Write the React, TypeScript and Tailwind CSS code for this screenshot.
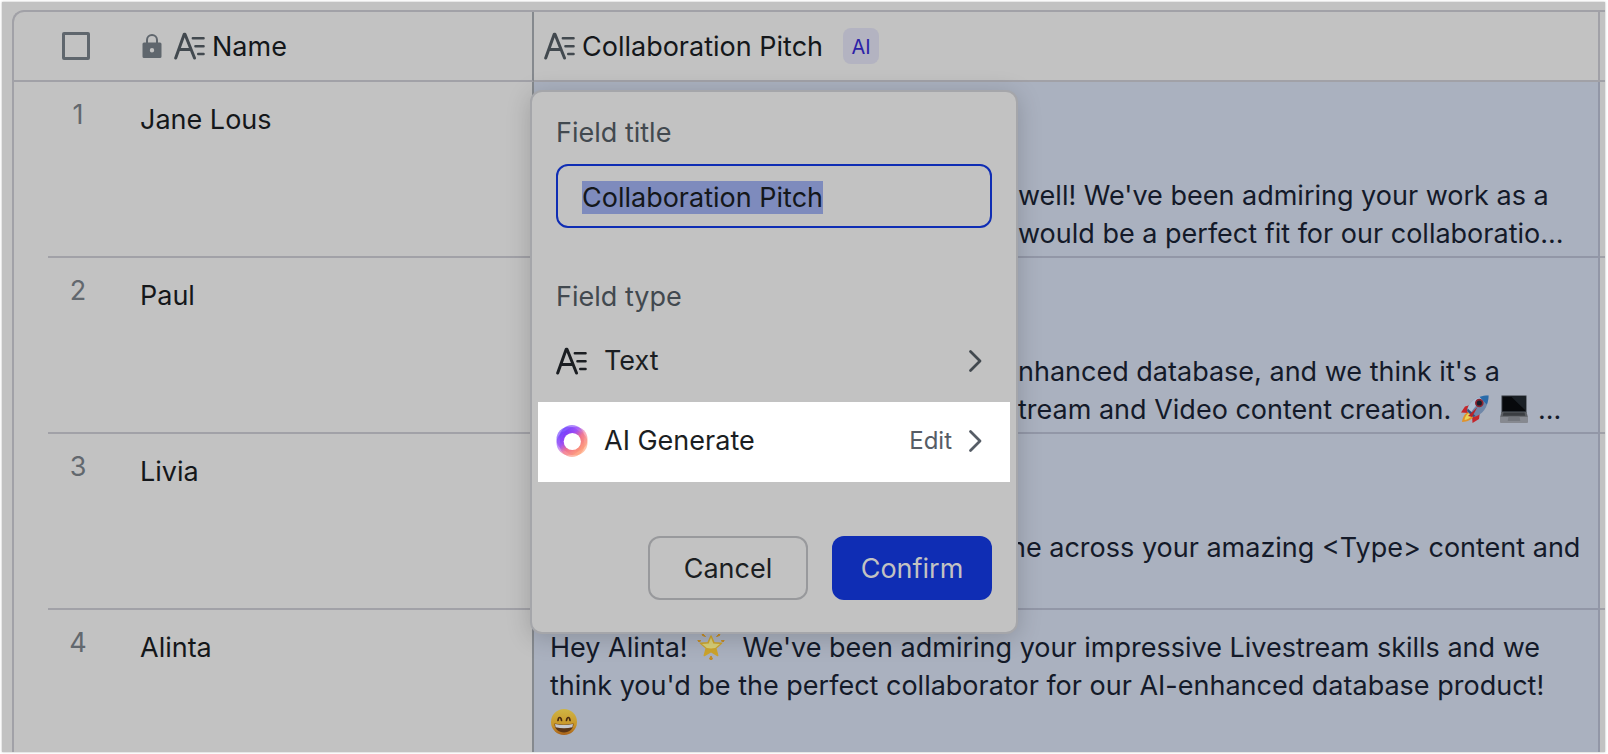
import React, { useEffect, useRef } from 'react';

function TextIcon({ className }: { className?: string }) {
  return (
    <svg className={className} width="32" height="28" viewBox="0 0 32 28" fill="none" stroke="currentColor" strokeLinecap="round" aria-hidden="true">
      <path d="M1.7 26 10.2 2.2h.8L20.5 26M5.2 17.6h11.6" strokeWidth="3" strokeLinejoin="round" />
      <path d="M18.8 6.2h10.8M21.4 14.2h8.2M24.2 22h5.4" strokeWidth="2.4" />
    </svg>
  );
}

function LockIcon() {
  return (
    <svg width="20" height="26" viewBox="0 0 20 26" fill="none" aria-hidden="true">
      <path d="M5 11V7a5 5 0 0 1 10 0v4" stroke="#5f666d" strokeWidth="2" />
      <path
        fillRule="evenodd"
        d="M2 9.6h16a1.5 1.5 0 0 1 1.5 1.5v12.4A1.5 1.5 0 0 1 18 25H2a1.5 1.5 0 0 1-1.5-1.5V11.1A1.5 1.5 0 0 1 2 9.6ZM10 15a2.2 2.2 0 1 0 0 4.4 2.2 2.2 0 0 0 0-4.4Z"
        fill="#5f666d"
      />
    </svg>
  );
}

function ChevronIcon({ className }: { className?: string }) {
  return (
    <svg className={className} width="14" height="24" viewBox="0 0 14 24" fill="none" aria-hidden="true">
      <path d="m2.5 2.5 9.5 9.5-9.5 9.5" stroke="currentColor" strokeWidth="2.8" strokeLinecap="round" strokeLinejoin="round" />
    </svg>
  );
}

function AiLogo() {
  return (
    <svg width="32" height="32" viewBox="0 0 32 32" aria-hidden="true">
      <defs>
        <linearGradient id="aiRing" gradientUnits="userSpaceOnUse" x1="6" y1="5" x2="26" y2="26">
          <stop offset="0" stopColor="#6434ff" />
          <stop offset="0.35" stopColor="#9a48f4" />
          <stop offset="0.6" stopColor="#f0708c" />
          <stop offset="1" stopColor="#ff9a70" />
        </linearGradient>
        <mask id="aiHole">
          <rect width="32" height="32" fill="#fff" />
          <circle cx="16.3" cy="16.5" r="8.6" fill="#000" />
        </mask>
      </defs>
      <g mask="url(#aiHole)" fill="url(#aiRing)" fillOpacity="0.6">
        <circle cx="16" cy="12.5" r="12.5" />
        <circle cx="19" cy="14.2" r="12.5" />
        <circle cx="19" cy="17.8" r="12.5" />
        <circle cx="16" cy="19.5" r="12.5" />
        <circle cx="13" cy="17.8" r="12.5" />
        <circle cx="13" cy="14.2" r="12.5" />
      </g>
    </svg>
  );
}

function Rocket() {
  return (
    <svg className="mx-0.5 inline-block align-[-4px]" width="28" height="28" viewBox="0 0 28 28" role="img" aria-label="rocket">
      <path d="M11 9.5 4 11.5 0 17.5l7.5.5zM19 16.500 18 24l-6.500 4-.5-7.500z" fill="#c4262b" />
      <path d="M8 17c-4 1-6.500 5-7 10C6.500 26.500 11 25 12.500 21z" fill="#e0932a" />
      <path d="M8.500 18c-3 1-4.500 4-5 7 3-.5 6-2 7.500-4.500z" fill="#e9d65a" />
      <path d="M6 16C7.500 6.500 15.500.5 27.500.5 27.500 12.500 21 20.500 12 22z" fill="#6f87a8" />
      <path d="M6 16C7.500 6.500 15.500.5 27.500.5 20.500 5 13.500 11.500 9 19z" fill="#afbed1" />
      <path d="M18.500 2C21.500.9 24.500.5 27.500.5c0 3.200-.5 6.200-1.700 9z" fill="#2a6ba9" />
      <path d="m6 16 6 6 2.500-.9-7.700-7.600z" fill="#33517f" />
      <circle cx="18.3" cy="8" r="4.300" fill="#8d2430" />
      <circle cx="18.3" cy="8" r="2.600" fill="#17202d" />
      <path d="m7 21 9.500-9L11 22z" fill="#b92328" />
    </svg>
  );
}

function Laptop() {
  return (
    <svg className="mx-0.5 inline-block align-[-4px]" width="28" height="28" viewBox="0 0 28 28" role="img" aria-label="laptop">
      <path d="M1.5.5h25V18h-25z" fill="#30353b" />
      <path d="M2.5 1.5h23V16h-23z" fill="#07090c" />
      <path d="M11 1.5h14.5v14z" fill="#1a2026" />
      <path d="M1.5 17h25l1.500 5.500H0z" fill="#5d6065" />
      <path d="M3.5 17.600h21l.7 3.200H2.800z" fill="#3b3e42" />
      <path d="M0 21.800h28V27a1 1 0 0 1-1 1H1a1 1 0 0 1-1-1z" fill="#868990" />
      <path d="M8.500 21.800h11l.8 4.200H7.700z" fill="#74777d" />
    </svg>
  );
}

function Star() {
  return (
    <svg className="mx-0.5 inline-block align-[-3px]" width="28" height="28" viewBox="0 0 28 28" role="img" aria-label="glowing star">
      <path d="m14 4 3 6.700 7.500.6-5.800 4.900 2 7.300-6.700-3.900-6.700 3.900 2-7.300-5.800-4.900 7.500-.6z" fill="#cda42c" stroke="#cda42c" strokeWidth="1.5" strokeLinejoin="round" />
      <path d="m14 5.500 2.300 6 6.700.6-4.800 3.900-4.200.6-4.200-.6L5 12.100l6.700-.6z" fill="#d8cf78" />
      <path d="m5 1 3.500 3.500L5.500 3.500zM23 1l-3.500 3.500 3-1zM.8 8.500l3 .2-1.800 1.300zM27.200 8.500l-3 .2 1.800 1.300zM14 24l1.500 3-1.500.8-1.500-.8z" fill="#c48b22" stroke="#c48b22" strokeLinejoin="round" />
    </svg>
  );
}

function Smile() {
  return (
    <svg className="inline-block align-[-3px]" width="28" height="28" viewBox="0 0 28 28" role="img" aria-label="grinning face">
      <defs>
        <linearGradient id="face" x1="0" y1="0" x2="0" y2="1">
          <stop offset="0" stopColor="#cfb544" />
          <stop offset="0.6" stopColor="#c9972a" />
          <stop offset="1" stopColor="#a9621b" />
        </linearGradient>
      </defs>
      <circle cx="14" cy="14" r="13" fill="url(#face)" />
      <path d="M8 12.500c.3-4 3-4 3.500 0M16.500 12.500c.5-4 3.200-4 3.500 0" fill="none" stroke="#4a2a10" strokeWidth="1.700" strokeLinecap="round" />
      <path d="M4.500 15.500c6 1.500 13 1.500 19 0 0 5.500-4 9-9.500 9s-9.500-3.500-9.500-9z" fill="#5a3516" />
      <path d="M5 16c6 1.400 12 1.400 18 0l-.6 3.300c-5.600 1.200-11.200 1.200-16.800 0z" fill="#c6c8cc" />
    </svg>
  );
}

interface Row {
  id: number;
  name: string;
  pitch: React.ReactNode;
}

const rows: Row[] = [
  {
    id: 1,
    name: 'Jane Lous',
    pitch: (
      <p className="pt-[76px] pl-[468px] whitespace-nowrap">
        well! We've been admiring your work as a
        <br />
        would be a perfect fit for our collaboratio...
      </p>
    ),
  },
  {
    id: 2,
    name: 'Paul',
    pitch: (
      <p className="pt-[76px] pl-[468px] whitespace-nowrap">
        nhanced database, and we think it's a
        <br />
        tream and Video content creation. <Rocket /> <Laptop /> ...
      </p>
    ),
  },
  {
    id: 3,
    name: 'Livia',
    pitch: <p className="pt-[76px] pl-[460px] whitespace-nowrap">ne across your amazing &lt;Type&gt; content and</p>,
  },
  {
    id: 4,
    name: 'Alinta',
    pitch: (
      <p className="whitespace-nowrap">
        Hey Alinta! <Star />&nbsp; We've been admiring your impressive Livestream skills and we
        <br />
        think you'd be the perfect collaborator for our AI-enhanced database product!
        <br />
        <Smile />
      </p>
    ),
  },
];

function FieldEditor() {
  const titleRef = useRef<HTMLInputElement>(null);

  useEffect(() => {
    // Select the current title so it can be replaced right away
    titleRef.current?.focus();
    titleRef.current?.select();
  }, []);

  return (
    <form
      onSubmit={(e) => e.preventDefault()}
      className="absolute top-[88px] left-[528px] w-[488px] rounded-xl border-2 border-[#a5a6aa] bg-[#c2c2c2] pt-5 pb-8 shadow-[0_4px_24px_rgba(0,0,0,0.18)]"
    >
      <div className="px-6">
        <label htmlFor="fieldTitle" className="block leading-[42px] text-[#42494f]">
          Field title
        </label>
        <input
          ref={titleRef}
          id="fieldTitle"
          type="text"
          defaultValue="Collaboration Pitch"
          className="mt-2.5 block h-16 w-full rounded-xl border-2 border-[#0f2db4] bg-transparent px-6 pt-0.5 text-[#14171a] outline-none selection:bg-[#7e8bbd] selection:text-[#14171a]"
        />
        <h2 className="mt-12 leading-[42px] text-[#42494f]">Field type</h2>
      </div>

      <div className="mt-1 px-1.5">
        <button type="button" className="flex h-20 w-full items-center px-[18px] pb-0.5 text-[#1b1e22]">
          <TextIcon />
          <span className="ml-4">Text</span>
          <ChevronIcon className="mr-2.5 ml-auto text-[#42494f]" />
        </button>
        <button type="button" className="flex h-20 w-full items-center bg-white px-[18px] pb-0.5 text-[#1b1e22]">
          <AiLogo />
          <span className="ml-4">AI Generate</span>
          <span className="ml-auto text-2xl text-[#565d66]">Edit</span>
          <ChevronIcon className="mr-2.5 ml-4 text-[#565d66]" />
        </button>
      </div>

      <div className="mt-[54px] flex justify-end gap-6 px-6">
        <button type="button" className="h-16 w-40 rounded-xl border-2 border-[#98999c] pt-0.5 text-[#1b1e22]">
          Cancel
        </button>
        <button type="submit" className="h-16 w-40 rounded-xl bg-[#0f2db4] pt-0.5 text-[#c2c2c2]">
          Confirm
        </button>
      </div>
    </form>
  );
}

export default function App() {
  return (
    <div className="h-screen overflow-hidden bg-white pt-0.5 pr-[3px] pb-0.5 pl-0.5 font-['Inter',sans-serif] text-[27px] leading-[38px] text-[#14171a]">
      <main className="relative h-full bg-[#c2c2c2] shadow-[0_0_2px_rgba(0,0,0,0.3)]">
        <div className="h-full overflow-hidden pt-2 pl-2.5">
          <div className="h-full rounded-tl-xl border-t-2 border-l-2 border-[#a1a1a7]">
            <table className="w-full table-fixed border-separate border-spacing-0 text-left">
              <colgroup>
                <col className="w-[34px]" />
                <col className="w-[60px]" />
                <col className="w-[426px]" />
                <col />
                <col className="w-[5px]" />
              </colgroup>
              <thead>
                <tr className="h-[70px]">
                  <td className="border-b-2 border-[#a1a1a7]" />
                  <th className="border-b-2 border-[#a1a1a7] pl-3.5">
                    <input type="checkbox" aria-label="Select all rows" className="block size-7 appearance-none rounded-xs border-3 border-[#5f666d]" />
                  </th>
                  <th className="border-r-2 border-b-2 border-r-[#85898e] border-b-[#a1a1a7] pl-[34px] font-normal">
                    <span className="flex items-center">
                      <LockIcon />
                      <TextIcon className="ml-3 text-[#42494f]" />
                      <span className="ml-1.5 pt-0.5">Name</span>
                    </span>
                  </th>
                  <th className="border-r-2 border-b-2 border-[#a1a1a7] pl-2.5 font-normal">
                    <span className="flex items-center">
                      <TextIcon className="text-[#42494f]" />
                      <span className="ml-1.5 pt-0.5">Collaboration Pitch</span>
                      <span className="ml-5 flex size-9 items-center justify-center rounded-lg bg-[#b3b3c1] pt-0.5 text-xl text-[#2c22a8]">AI</span>
                    </span>
                  </th>
                  <td className="border-b-2 border-[#a1a1a7]" />
                </tr>
              </thead>
              <tbody>
                {rows.map((row) => (
                  <tr key={row.id} className="h-[176px] align-top">
                    <td />
                    <td className="border-b-2 border-[#a1a1a7] pt-3.5 text-center text-[#62686e]">{row.id}</td>
                    <td className="border-r-2 border-b-2 border-r-[#85898e] border-b-[#a1a1a7] pt-[19px] pl-8">{row.name}</td>
                    <td className="overflow-hidden border-r-2 border-b-2 border-[#9297a7] bg-[#aab1bf] pt-[19px] pl-4 text-[#141a29]">{row.pitch}</td>
                    <td className="border-b-2 border-[#a1a1a7]" />
                  </tr>
                ))}
              </tbody>
            </table>
          </div>
        </div>
        <FieldEditor />
      </main>
    </div>
  );
}
